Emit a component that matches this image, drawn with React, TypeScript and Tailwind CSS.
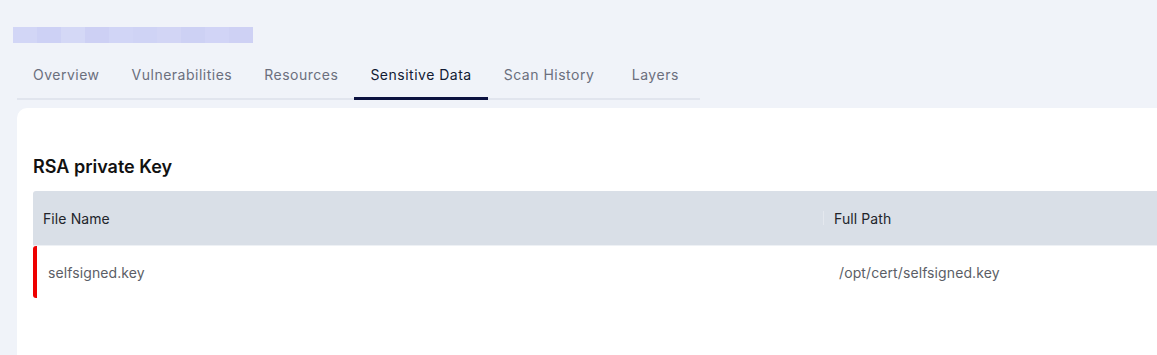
import React from 'react';

const tabs = ['Overview', 'Vulnerabilities', 'Resources', 'Sensitive Data', 'Scan History', 'Layers'];

// blurred title placeholder (redacted in the screenshot)
const blurBlocks = ['#d2d6f6', '#cdd1f5', '#d4d8f6', '#cdd0f4', '#d1d5f6', '#cfd3f5', '#d2d5f5', '#cdd1f4', '#d1d4f6', '#ced1f4'];

export default function App() {
  return (
    <div className="h-[355px] w-[1157px] overflow-hidden bg-[#f0f3f9] font-['Inter',sans-serif]">
      <div className="pt-[27px] pl-[13px]">
        <div className="flex h-4 w-[240px] overflow-hidden">
          {blurBlocks.map((c, i) => (
            <div key={i} className="h-full flex-1" style={{ backgroundColor: c }} />
          ))}
        </div>
      </div>

      <div className="ml-[17px] mt-[20px] flex w-[683px] border-b-2 border-[#e1e5ee]">
        {tabs.map((t) => {
          const active = t === 'Sensitive Data';
          return (
            <div
              key={t}
              className={`-mb-[2px] flex h-[37px] min-w-[90px] shrink-0 items-start justify-center whitespace-nowrap px-4 pt-[1px] text-[14px] tracking-[0.5px] ${
                active
                  ? 'border-b-[3px] border-[#0b1240] text-[#111a33]'
                  : 'text-[#6b6f7d]'
              }`}
            >
              {t}
            </div>
          );
        })}
      </div>

      <div className="ml-[17px] mt-[8px] h-[260px] rounded-tl-[10px] bg-white pl-4 pt-[47px]">
        <h2 className="text-[18px] font-semibold leading-[24px] text-[#111111]">RSA private Key</h2>

        <div className="mt-[12px]">
          <div className="flex h-[55px] items-center rounded-tl-[3px] border-b border-[#eef1f5] bg-[#d9dfe7] text-[14px] tracking-[0.1px] text-[#22252b]">
            <div className="w-[790px] pl-[10px]">File Name</div>
            <div className="flex items-center">
              <div className="mr-[10px] h-[14px] w-px bg-[#e4e8ee]" />
              Full Path
            </div>
          </div>
          <div className="flex h-[52px] items-center rounded-l-[3px] border-l-4 border-[#ee0000] text-[14px] tracking-[0.1px] text-[#5b5e66]">
            <div className="w-[791px] pl-[11px]">selfsigned.key</div>
            <div className="pl-[11px]">/opt/cert/selfsigned.key</div>
          </div>
        </div>
      </div>
    </div>
  );
}
